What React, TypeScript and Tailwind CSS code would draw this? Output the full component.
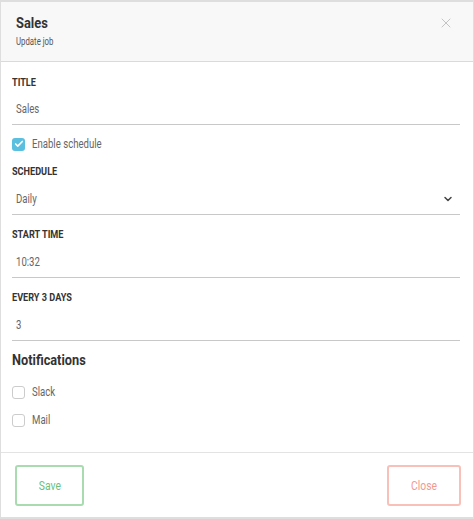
import { Check, ChevronDown, X } from 'lucide-react';

const fields = [
  { label: 'Schedule', value: 'Daily', select: true },
  { label: 'Start time', value: '10:32' },
  { label: 'Every 3 days', value: '3' },
];

// the reference uses a condensed face; squeeze Roboto to match
const narrow = 'inline-block origin-left scale-x-[0.8] whitespace-nowrap';
const narrowLabel = 'inline-block origin-left scale-x-[0.83] whitespace-nowrap';

const Field = ({ label, value, select }: { label: string; value: string; select?: boolean }) => (
  <div className="mt-[13px]">
    <div className="h-[14px] text-[11px] leading-[14px] font-bold uppercase text-[#333]">
      <span className={narrowLabel}>{label}</span>
    </div>
    <div className="mt-px h-[35px] pt-[3px] flex items-center justify-between border-b border-[#c8c8c8] pl-1 pr-[6px] text-[12px] text-[#666]">
      <span className={narrow}>{value}</span>
      {select && <ChevronDown className="w-3 h-3 text-[#444]" strokeWidth={3} />}
    </div>
  </div>
);

const CheckRow = ({ label, checked }: { label: string; checked?: boolean }) => (
  <div className="h-4 flex items-center gap-[7px]">
    {checked ? (
      <span className="w-[13px] h-[13px] rounded-[3px] bg-[#5bbfe0] flex items-center justify-center">
        <Check className="w-[10px] h-[10px] text-white" strokeWidth={4} />
      </span>
    ) : (
      <span className="w-[13px] h-[13px] rounded-[3px] border border-[#ccc] bg-white" />
    )}
    <span className={`${narrow} text-[12px] text-[#666]`}>{label}</span>
  </div>
);

export default function App() {
  return (
    <div className="w-[474px] h-[519px] flex flex-col bg-white border-t-2 border-x border-b-2 border-[#dedede] font-['Roboto',sans-serif]">
      <div className="h-[60px] bg-[#f8f8f8] border-b border-[#dadada] flex justify-between pl-[15px] pr-[19px] pt-[11px]">
        <div>
          <div className="text-[15px] leading-[20px] font-bold text-[#333]">
            <span className="inline-block origin-left scale-x-[0.86] whitespace-nowrap">Sales</span>
          </div>
          <div className="mt-[2px] text-[10px] leading-[14px] text-[#555]">
            <span className="inline-block origin-left scale-x-[0.78] whitespace-nowrap">Update job</span>
          </div>
        </div>
        <X className="mt-[2px] w-4 h-4 text-[#c4c4c4]" strokeWidth={1.5} />
      </div>

      <div className="flex-1 pl-[11px] pr-[13px] pt-px">
        <div className="mt-[13px]">
          <div className="h-[14px] text-[11px] leading-[14px] font-bold uppercase text-[#333]">
            <span className={narrowLabel}>Title</span>
          </div>
          <div className="mt-px h-[34px] pt-[2px] flex items-center border-b border-[#c8c8c8] pl-1 text-[12px] text-[#666]">
            <span className={narrow}>Sales</span>
          </div>
        </div>
        <div className="mt-[11px]">
          <CheckRow label="Enable schedule" checked />
        </div>
        <div className="mt-[3px]">
          {fields.map((f) => (
            <Field key={f.label} {...f} />
          ))}
        </div>
        <div className="mt-[7px] h-6 flex items-center text-[15px] font-bold text-[#333]">
          <span className="inline-block origin-left scale-x-[0.85] whitespace-nowrap">Notifications</span>
        </div>
        <div className="mt-3">
          <CheckRow label="Slack" />
        </div>
        <div className="mt-3">
          <CheckRow label="Mail" />
        </div>
      </div>

      <div className="h-[65px] border-t border-[#e3e3e3] flex items-start justify-between pl-[14px] pr-[12px] pt-[12px]">
        <button className="w-[69px] h-[41px] border-2 border-[#a8dbb0] rounded-[3px] text-[12px] text-[#6cbf7c]">
          <span className="inline-block scale-x-[0.86]">Save</span>
        </button>
        <button className="w-[74px] h-[41px] border-2 border-[#f8c0b8] rounded-[3px] text-[12px] text-[#f19a8f]">
          <span className="inline-block scale-x-[0.86]">Close</span>
        </button>
      </div>
    </div>
  );
}
